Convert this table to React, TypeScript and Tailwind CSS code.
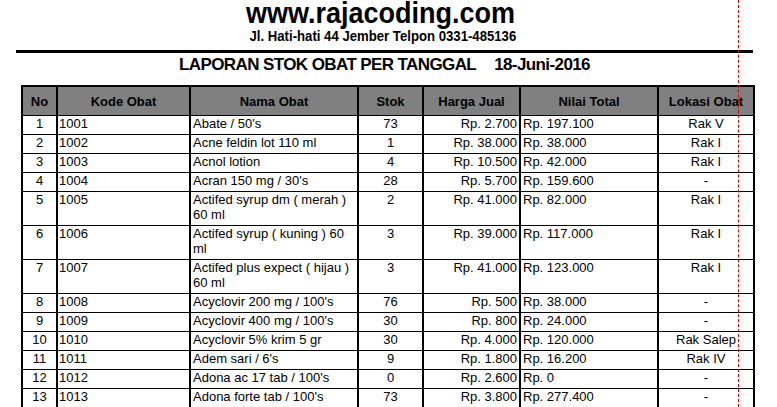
import React from "react";

type Row = {
  no: number;
  kode: string;
  nama: string[];
  stok: string;
  harga: string;
  total: string;
  lokasi: string;
};

const ROWS: Row[] = [
  { no: 1, kode: "1001", nama: ["Abate / 50's"], stok: "73", harga: "Rp. 2.700", total: "Rp. 197.100", lokasi: "Rak V" },
  { no: 2, kode: "1002", nama: ["Acne feldin lot 110 ml"], stok: "1", harga: "Rp. 38.000", total: "Rp. 38.000", lokasi: "Rak I" },
  { no: 3, kode: "1003", nama: ["Acnol lotion"], stok: "4", harga: "Rp. 10.500", total: "Rp. 42.000", lokasi: "Rak I" },
  { no: 4, kode: "1004", nama: ["Acran 150 mg / 30's"], stok: "28", harga: "Rp. 5.700", total: "Rp. 159.600", lokasi: "-" },
  { no: 5, kode: "1005", nama: ["Actifed syrup dm ( merah )", "60 ml"], stok: "2", harga: "Rp. 41.000", total: "Rp. 82.000", lokasi: "Rak I" },
  { no: 6, kode: "1006", nama: ["Actifed syrup ( kuning ) 60", "ml"], stok: "3", harga: "Rp. 39.000", total: "Rp. 117.000", lokasi: "Rak I" },
  { no: 7, kode: "1007", nama: ["Actifed plus expect ( hijau )", "60 ml"], stok: "3", harga: "Rp. 41.000", total: "Rp. 123.000", lokasi: "Rak I" },
  { no: 8, kode: "1008", nama: ["Acyclovir 200 mg / 100's"], stok: "76", harga: "Rp. 500", total: "Rp. 38.000", lokasi: "-" },
  { no: 9, kode: "1009", nama: ["Acyclovir 400 mg / 100's"], stok: "30", harga: "Rp. 800", total: "Rp. 24.000", lokasi: "-" },
  { no: 10, kode: "1010", nama: ["Acyclovir 5% krim 5 gr"], stok: "30", harga: "Rp. 4.000", total: "Rp. 120.000", lokasi: "Rak Salep" },
  { no: 11, kode: "1011", nama: ["Adem sari / 6's"], stok: "9", harga: "Rp. 1.800", total: "Rp. 16.200", lokasi: "Rak IV" },
  { no: 12, kode: "1012", nama: ["Adona ac 17 tab / 100's"], stok: "0", harga: "Rp. 2.600", total: "Rp. 0", lokasi: "-" },
  { no: 13, kode: "1013", nama: ["Adona forte tab / 100's"], stok: "73", harga: "Rp. 3.800", total: "Rp. 277.400", lokasi: "-" },
];

const cell = "border-r-2 border-black shrink-0";

export default function App() {
  return (
    <div className="relative w-[777px] h-[407px] overflow-hidden bg-white text-black font-['Liberation_Sans',Arial,sans-serif]">
      <div className="ml-[16px] w-[737px] flex flex-col">
        <div className="h-[26px] pr-[8px] flex justify-center text-[30px] leading-[26px] font-bold">
          <span className="inline-block scale-x-[0.9]">www.rajacoding.com</span>
        </div>
        <div className="mt-[3px] h-[15px] pr-[4px] flex justify-center text-[14px] leading-[15px] font-bold">
          <span className="inline-block scale-x-[0.94] whitespace-nowrap">
            Jl. Hati-hati 44 Jember Telpon 0331-485136
          </span>
        </div>

        <div className="mt-[6px] h-[3px] bg-black" />

        <div className="mt-[2px] h-[20px] flex justify-center gap-[18px] text-[17px] leading-[20px] font-bold tracking-[-0.6px]">
          <span>LAPORAN STOK OBAT PER TANGGAL</span>
          <span>18-Juni-2016</span>
        </div>

        {/* table */}
        <div className="mt-[10px] ml-[5px] w-[734px] text-[13px] leading-[15px]">
          <div className="flex h-[31px] border-t-2 border-b border-black bg-[#808080] font-bold">
            <div className={`${cell} border-l-2 w-[37px] flex items-center justify-center`}>No</div>
            <div className={`${cell} w-[133px] flex items-center justify-center`}>Kode Obat</div>
            <div className={`${cell} w-[168px] flex items-center justify-center`}>Nama Obat</div>
            <div className={`${cell} w-[65px] flex items-center justify-center`}>Stok</div>
            <div className={`${cell} w-[97px] flex items-center justify-center`}>Harga Jual</div>
            <div className={`${cell} w-[138px] flex items-center justify-center`}>Nilai Total</div>
            <div className={`${cell} w-[96px] flex items-center justify-center`}>Lokasi Obat</div>
          </div>

          {ROWS.map((r) => (
            <div
              key={r.no}
              className={`flex border-b border-black ${r.nama.length > 1 ? "h-[34px]" : "h-[19px]"}`}
            >
              <div className={`${cell} border-l-2 w-[37px] text-center`}>{r.no}</div>
              <div className={`${cell} w-[133px] pl-[1px]`}>{r.kode}</div>
              <div className={`${cell} w-[168px] pl-[2px]`}>
                {r.nama.map((line) => (
                  <div key={line}>{line}</div>
                ))}
              </div>
              <div className={`${cell} w-[65px] text-center`}>{r.stok}</div>
              <div className={`${cell} w-[97px] text-right pr-[2px]`}>{r.harga}</div>
              <div className={`${cell} w-[138px] pl-[2px]`}>{r.total}</div>
              <div className={`${cell} w-[96px] text-center`}>{r.lokasi}</div>
            </div>
          ))}
        </div>
      </div>

      {/* page margin guide */}
      <div className="absolute left-[738px] top-0 h-full border-l border-dashed border-[#cc0000]" />
    </div>
  );
}
